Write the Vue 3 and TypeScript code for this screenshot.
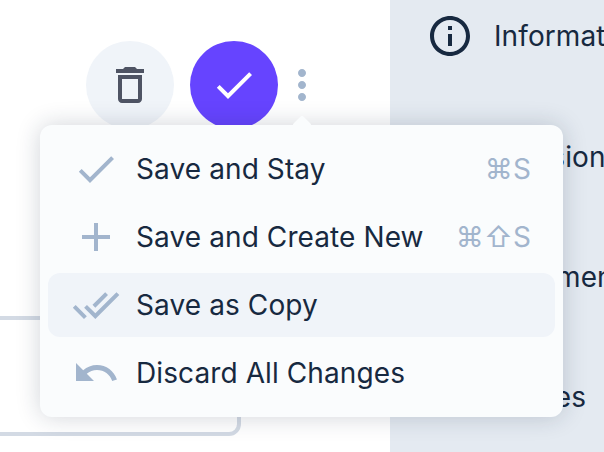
<template>
  <div class="page">
    <main class="main">
      <header class="actions">
        <button class="round round-delete" type="button" aria-label="Delete">
          <svg class="icon" viewBox="0 0 24 24"><path :d="icons.trash" /></svg>
        </button>
        <button class="round round-save" type="button" aria-label="Save">
          <svg class="icon" viewBox="0 0 24 24"><path :d="icons.check" /></svg>
        </button>
        <svg class="icon more" viewBox="0 0 24 24"><path :d="icons.more" /></svg>
      </header>

      <div class="card" />

      <!-- Save options dropdown -->
      <div class="menu">
        <span class="arrow" />
        <ul class="menu-list">
          <li
            v-for="item in menuItems"
            :key="item.label"
            class="menu-item"
            :class="{ active: item.active }"
          >
            <svg class="icon" viewBox="0 0 24 24"><path :d="item.icon" /></svg>
            <span class="menu-label">{{ item.label }}</span>
            <span v-if="item.keys" class="menu-keys">{{ item.keys }}</span>
          </li>
        </ul>
      </div>
    </main>

    <aside class="sidebar">
      <div v-for="row in sidebarRows" :key="row.label" class="side-row">
        <span class="side-icon">
          <svg class="icon" viewBox="0 0 24 24"><path :d="row.icon" /></svg>
          <span v-if="row.badge" class="badge" />
        </span>
        <span class="side-label">{{ row.label }}</span>
      </div>
    </aside>
  </div>
</template>

<script setup lang="ts">
const icons = {
  trash: 'M6 19c0 1.1.9 2 2 2h8c1.1 0 2-.9 2-2V7H6v12zM8 9h8v10H8V9zm7.5-5l-1-1h-5l-1 1H5v2h14V4h-3.5z',
  check: 'M9 16.17L4.83 12l-1.42 1.41L9 19 21 7l-1.41-1.41z',
  more: 'M12 8c1.1 0 2-.9 2-2s-.9-2-2-2-2 .9-2 2 .9 2 2 2zm0 2c-1.1 0-2 .9-2 2s.9 2 2 2 2-.9 2-2-.9-2-2-2zm0 6c-1.1 0-2 .9-2 2s.9 2 2 2 2-.9 2-2-.9-2-2-2z',
  add: 'M19 13h-6v6h-2v-6H5v-2h6V5h2v6h6v2z',
  doneAll: 'M18 7l-1.41-1.41-6.34 6.34 1.41 1.41L18 7zm4.24-1.41L11.66 16.17 7.48 12l-1.41 1.41L11.66 19l12-12-1.42-1.41zM.41 13.41L6 19l1.41-1.41L1.83 12 .41 13.41z',
  undo: 'M12.5 8c-2.65 0-5.05.99-6.9 2.6L2 7v9h9l-3.62-3.62c1.39-1.16 3.16-1.88 5.12-1.88 3.54 0 6.55 2.31 7.6 5.5l2.37-.78C21.08 11.03 17.15 8 12.5 8z',
  info: 'M11 7h2v2h-2zm0 4h2v6h-2zm1-9C6.48 2 2 6.48 2 12s4.48 10 10 10 10-4.48 10-10S17.52 2 12 2zm0 18c-4.41 0-8-3.59-8-8s3.59-8 8-8 8 3.59 8 8-3.59 8-8 8z',
  history: 'M13 3a9 9 0 0 0-9 9H1l4 4 4-4H6a7 7 0 1 1 2.05 4.95l-1.42 1.42A9 9 0 1 0 13 3zm-1 5v5l4.25 2.52.77-1.28-3.52-2.09V8z',
  chat: 'M20 2H4c-1.1 0-2 .9-2 2v18l4-4h14c1.1 0 2-.9 2-2V4c0-1.1-.9-2-2-2zm0 14H6l-2 2V4h16v12z',
  share: 'M18 16.08c-.76 0-1.44.3-1.96.77L8.91 12.7c.05-.23.09-.46.09-.7s-.04-.47-.09-.7l7.05-4.11c.54.5 1.25.81 2.04.81 1.66 0 3-1.34 3-3s-1.34-3-3-3-3 1.34-3 3c0 .24.04.47.09.7L8.04 9.81C7.5 9.31 6.79 9 6 9c-1.66 0-3 1.34-3 3s1.34 3 3 3c.79 0 1.5-.31 2.04-.81l7.12 4.16c-.05.21-.08.43-.08.65 0 1.61 1.31 2.92 2.92 2.92 1.61 0 2.92-1.31 2.92-2.92s-1.31-2.92-2.92-2.92z'
}

interface MenuItem {
  label: string
  icon: string
  keys?: string
  active?: boolean
}

const menuItems: MenuItem[] = [
  { label: 'Save and Stay', icon: icons.check, keys: '⌘S' },
  { label: 'Save and Create New', icon: icons.add, keys: '⌘⇧S' },
  { label: 'Save as Copy', icon: icons.doneAll, active: true },
  { label: 'Discard All Changes', icon: icons.undo }
]

const sidebarRows = [
  { label: 'Information', icon: icons.info, badge: false },
  { label: 'Revisions', icon: icons.history, badge: true },
  { label: 'Comments', icon: icons.chat, badge: false },
  { label: 'Shares', icon: icons.share, badge: false }
]
</script>

<style scoped>
.page {
  display: flex;
  width: 604px;
  height: 452px;
  overflow: hidden;
  background: #ffffff;
  font-family: Inter, "Liberation Sans", sans-serif;
  font-size: 28px;
  font-weight: 400;
  letter-spacing: 0.1px;
  color: #172940;
}

.icon {
  display: block;
  flex: none;
  width: 48px;
  height: 48px;
  fill: currentColor;
}

/* Main column */
.main {
  position: relative;
  flex: none;
  width: 390px;
}

.actions {
  display: flex;
  align-items: center;
  justify-content: flex-end;
  padding: 41px 64px 0 0;
}

.round {
  display: flex;
  align-items: center;
  justify-content: center;
  width: 88px;
  height: 88px;
  padding: 0;
  border: none;
  border-radius: 50%;
}

.round-delete {
  margin-right: 16px;
  background: #f0f4f9;
  color: #4f5464;
}

.round-save {
  background: #6644ff;
  color: #ffffff;
}

.more {
  color: #a2b5cd;
}

.card {
  width: 261px;
  height: 120px;
  margin: 187px 0 0 -20px;
  box-sizing: border-box;
  border: 4px solid #d3dae4;
  border-radius: 12px;
}

/* Dropdown */
.menu {
  position: absolute;
  z-index: 2;
  top: 125px;
  left: 40px;
  width: 523px;
  height: 292px;
  border-radius: 12px;
  background: #fafcfd;
  box-shadow: 0 0 24px rgba(23, 41, 64, 0.2);
}

.arrow {
  position: absolute;
  top: -7px;
  left: 255px;
  width: 14px;
  height: 14px;
  border-radius: 2px;
  background: #fafcfd;
  transform: rotate(45deg);
}

.menu-list {
  position: relative;
  display: flex;
  flex-direction: column;
  gap: 4px;
  margin: 0;
  padding: 12px 8px;
  list-style: none;
}

.menu-item {
  display: flex;
  align-items: center;
  height: 64px;
  padding: 0 24px;
  border-radius: 12px;
  color: #a2b5cd;
}

.menu-item.active {
  background: #f0f4f9;
}

.menu-label {
  flex: 1;
  margin-left: 16px;
  color: #172940;
}

.menu-keys {
  color: #a2b5cd;
}

/* Sidebar */
.sidebar {
  flex: 1;
  display: flex;
  flex-direction: column;
  margin-top: -24px;
  background: #e4eaf1;
}

.side-row {
  display: flex;
  flex: none;
  align-items: center;
  gap: 20px;
  height: 120px;
  padding-left: 36px;
  white-space: nowrap;
}

.side-row:first-child {
  margin-bottom: 1px;
}

.side-icon {
  position: relative;
}

.badge {
  position: absolute;
  top: -8px;
  left: 34px;
  width: 16px;
  height: 16px;
  border-radius: 50%;
  background: #6644ff;
}
</style>
